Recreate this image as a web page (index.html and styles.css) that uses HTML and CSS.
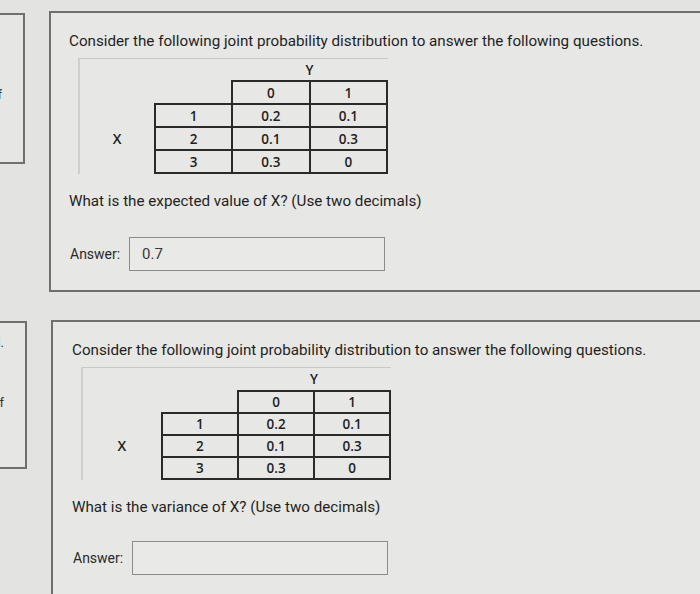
FILE: index.html
```html
<!DOCTYPE html>
<html>
<head>
<meta charset="utf-8">
<link rel="stylesheet" href="styles.css">
</head>
<body>
<div class="page">
  <div class="side">
    <div class="info info-a">
      <div class="info-line">Marked out of</div>
    </div>
    <div class="info info-b">
      <div class="info-line dot">Not yet answered.</div>
      <div class="info-line">Marked out of</div>
    </div>
  </div>
  <div class="main">
    <div class="card card-a">
      <p class="qtext">Consider the following joint probability distribution to answer the following questions.</p>
      <div class="frame">
        <table class="dist">
          <tr class="yrow"><td class="xcol"></td><td></td><td colspan="2" class="ylabel">Y</td></tr>
          <tr><td class="xcol"></td><td></td><td class="cell">0</td><td class="cell">1</td></tr>
          <tr><td class="xcol xlabel" rowspan="3">X</td><td class="cell">1</td><td class="cell">0.2</td><td class="cell">0.1</td></tr>
          <tr><td class="cell">2</td><td class="cell">0.1</td><td class="cell">0.3</td></tr>
          <tr><td class="cell">3</td><td class="cell">0.3</td><td class="cell">0</td></tr>
        </table>
      </div>
      <p class="qtext question">What is the expected value of X? (Use two decimals)</p>
      <div class="answer">
        <span class="answer-label">Answer:</span>
        <div class="answer-box">0.7</div>
      </div>
    </div>
    <div class="card card-b">
      <p class="qtext">Consider the following joint probability distribution to answer the following questions.</p>
      <div class="frame">
        <table class="dist">
          <tr class="yrow"><td class="xcol"></td><td></td><td colspan="2" class="ylabel">Y</td></tr>
          <tr><td class="xcol"></td><td></td><td class="cell">0</td><td class="cell">1</td></tr>
          <tr><td class="xcol xlabel" rowspan="3">X</td><td class="cell">1</td><td class="cell">0.2</td><td class="cell">0.1</td></tr>
          <tr><td class="cell">2</td><td class="cell">0.1</td><td class="cell">0.3</td></tr>
          <tr><td class="cell">3</td><td class="cell">0.3</td><td class="cell">0</td></tr>
        </table>
      </div>
      <p class="qtext question">What is the variance of X? (Use two decimals)</p>
      <div class="answer">
        <span class="answer-label">Answer:</span>
        <div class="answer-box"></div>
      </div>
    </div>
  </div>
</div>
</body>
</html>
```

FILE: styles.css
```css
html, body {
  margin: 0;
  padding: 0;
  height: 100%;
  overflow: hidden;
  background: #e3e3e1;
}

body {
  font-family: Roboto, "Liberation Sans", sans-serif;
  color: #1f1f1f;
}

.page {
  display: flex;
  align-items: flex-start;
  width: 720px;
}

.side {
  flex: none;
  width: 49px;
  display: flex;
  flex-direction: column;
}

.info {
  box-sizing: border-box;
  width: 140px;
  margin-left: -115px;
  border: 2px solid #6f6f6f;
  background: #e6e6e4;
  overflow: hidden;
  font-size: 13px;
  color: #333;
}

.info-a {
  margin-top: 13px;
  height: 151px;
  padding-top: 72px;
}

.info-b {
  margin-top: 157px;
  margin-left: -113px;
  height: 148px;
  padding-top: 12px;
}

.info-b .info-line + .info-line {
  margin-top: 44px;
}

.info-line {
  text-align: right;
  padding-right: 21px;
  white-space: nowrap;
  line-height: 16px;
}

.main {
  flex: 1;
  display: flex;
  flex-direction: column;
}

.card {
  box-sizing: border-box;
  border: 2px solid #6f6f6f;
  border-right: none;
  background: #e7e7e5;
  padding: 18px 0 0 18px;
}

.card-a {
  margin-top: 11px;
  height: 281px;
}

.card-b {
  margin-top: 28px;
  margin-left: 2px;
  height: 300px;
  padding-left: 19px;
}

.qtext {
  margin: 0;
  font-size: 15.2px;
  line-height: 20px;
  color: #1f1f1f;
}

.frame {
  margin: 7px 0 0 9px;
  width: 310px;
  border-top: 1px solid #c9c9c7;
  border-left: 2px solid #cfcfcd;
  box-sizing: border-box;
}

.dist {
  border-collapse: collapse;
  font-family: "Open Sans", Lato, sans-serif;
  font-weight: 600;
  font-size: 13.5px;
  color: #1e1e1e;
}

.dist td {
  padding: 0;
  height: 21px;
  line-height: 18px;
  text-align: center;
  width: 77px;
}

.dist td.xcol {
  width: 76px;
}

.dist .yrow td {
  height: 21px;
}

.dist .cell {
  border: 2px solid #2a2a2a;
}

.ylabel {
  vertical-align: middle;
}

.xlabel {
  font-size: 14px;
}

.card-b .dist td {
  height: 20px;
}

.card-b .dist .yrow td {
  height: 22px;
}

.card-b .dist td.cell {
  width: 75px;
}

.card-b .dist td.xcol {
  width: 79px;
}

.question {
  margin-top: 17px;
}

.answer {
  display: flex;
  align-items: center;
  margin-top: 26px;
}

.card-b .answer {
  margin-top: 24px;
}

.answer-label {
  width: 59px;
  padding-left: 1px;
  font-size: 14px;
  color: #2a2a2a;
}

.answer-box {
  box-sizing: border-box;
  width: 256px;
  height: 34px;
  border: 1px solid #8c8c8a;
  background: #e9e9e7;
  padding-left: 12px;
  font-size: 15px;
  line-height: 32px;
  color: #3a3a3a;
}
```
